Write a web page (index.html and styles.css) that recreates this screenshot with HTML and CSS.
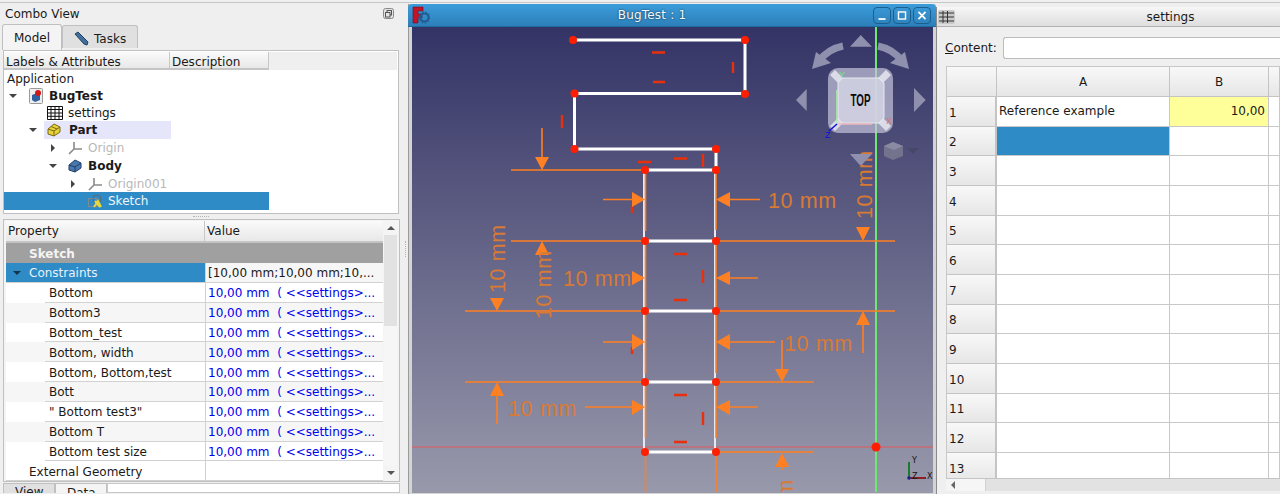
FILE: index.html
```html
<!DOCTYPE html>
<html lang="en">
<head>
  <meta charset="UTF-8">
  <title>BugTest : 1</title>
  <link rel="stylesheet" href="styles.css">
</head>
<body>
<div class="app">

  <!-- left dock -->
  <div class="combo">
    <div class="dock-title">
      <span>Combo View</span>
      <svg class="float-btn" viewBox="0 0 11 11"><rect x=".5" y=".5" width="10" height="10" rx="2" fill="#e4e4e4" stroke="#888"/><rect x="4" y="2.5" width="4.5" height="4.5" fill="none" stroke="#555"/><rect x="2.5" y="4.5" width="4.5" height="4.5" fill="#e4e4e4" stroke="#555"/></svg>
    </div>
    <div class="tabs">
      <div class="tab active">Model</div>
      <div class="tab tasks">
        <svg class="tab-icon" viewBox="0 0 16 16"><path d="M2 3 L5 1 L15 11 L14 14 L11 13 Z" fill="#3f6f9f" stroke="#24405c"/></svg>
        Tasks
      </div>
    </div>

    <div class="tree-frame">
      <div class="tree-head">
        <div class="th labels">Labels &amp; Attributes</div>
        <div class="th desc">Description</div>
      </div>
      <div class="tree-row short lvl0"><span class="label">Application</span></div>
      <div class="tree-row short lvl0">
        <span class="caret down"></span>
        <svg class="ti doc" viewBox="0 0 16 16"><rect x="1.5" y=".5" width="13" height="15" rx="1" fill="#eee" stroke="#999"/><path d="M4 7 L9 5 L12 7 L12 12 L7 14 L4 12 Z" fill="#2f5f9f"/><circle cx="10" cy="5" r="3" fill="#d01818"/></svg>
        <span class="label bold">BugTest</span>
      </div>
      <div class="tree-row short lvl1">
        <svg class="ti sheet-icon" viewBox="0 0 16 14"><path d="M.5 .5H15.5V13.5H.5Z M.5 3.500H15.5 M.5 7H15.5 M.5 10.300H15.5 M4 .5V13.5 M8 .5V13.5 M12 .5V13.5" fill="#fff" stroke="#111"/></svg>
        <span class="label">settings</span>
      </div>
      <div class="tree-row lvl1 with-caret">
        <span class="caret down"></span>
        <span class="hl">
          <svg class="ti part" viewBox="0 0 14 14"><path d="M1 6 L7 1 L13 4 L13 9 L7 13 L1 11 Z" fill="#e8d23c" stroke="#7a6a10"/><path d="M1 6 L7 8 L13 4 M7 8 V13 M4 3.5 L10 6" fill="none" stroke="#7a6a10"/></svg>
          <span class="label bold">Part</span>
        </span>
      </div>
      <div class="tree-row lvl2">
        <span class="caret right"></span>
        <svg class="ti origin" viewBox="0 0 14 14"><path d="M6 1 V8 M6 8 L1 13 M6 8 H14" fill="none" stroke="#8a8a8a" stroke-width="1.6"/></svg>
        <span class="label dim">Origin</span>
      </div>
      <div class="tree-row lvl2">
        <span class="caret down"></span>
        <svg class="ti body-icon" viewBox="0 0 14 14"><path d="M1 6 L7 1 L13 4 L13 9 L7 13 L1 11 Z" fill="#4a78ae" stroke="#1f3f66"/><path d="M1 6 L7 8 L13 4 M7 8 V13" fill="none" stroke="#1f3f66"/></svg>
        <span class="label bold">Body</span>
      </div>
      <div class="tree-row lvl3">
        <span class="caret right"></span>
        <svg class="ti origin" viewBox="0 0 14 14"><path d="M6 1 V8 M6 8 L1 13 M6 8 H14" fill="none" stroke="#8a8a8a" stroke-width="1.6"/></svg>
        <span class="label dim">Origin001</span>
      </div>
      <div class="tree-row lvl3 selected">
        <span class="caret"></span>
        <svg class="ti sketch-icon" viewBox="0 0 16 14"><rect x=".5" y="4.5" width="8" height="8" fill="none" stroke="#7c8a96"/><circle cx="9" cy="5" r="4" fill="none" stroke="#5a6a7a"/><path d="M6 13 L10 7 L13 13 M7 7 L12 13" fill="none" stroke="#e6d83a" stroke-width="2"/></svg>
        <span class="label">Sketch</span>
      </div>
    </div>

    <div class="split-h"></div>

    <div class="prop-frame">
      <div class="prop-table">
        <div class="prop-head">
          <div class="th p-name">Property</div>
          <div class="th p-val">Value</div>
        </div>
        <div class="prop-group">Sketch</div>
        <div class="prop-row top">
          <div class="p-cell p-sel"><span class="caret down light"></span>Constraints</div>
          <div class="p-cell p-list">[10,00 mm;10,00 mm;10,...</div>
        </div>
        <div class="prop-row child"><div class="p-cell">Bottom</div><div class="p-cell p-bound">10,00 mm  ( &lt;&lt;settings&gt;...</div></div>
        <div class="prop-row child alt"><div class="p-cell">Bottom3</div><div class="p-cell p-bound">10,00 mm  ( &lt;&lt;settings&gt;...</div></div>
        <div class="prop-row child"><div class="p-cell">Bottom_test</div><div class="p-cell p-bound">10,00 mm  ( &lt;&lt;settings&gt;...</div></div>
        <div class="prop-row child alt"><div class="p-cell">Bottom, width</div><div class="p-cell p-bound">10,00 mm  ( &lt;&lt;settings&gt;...</div></div>
        <div class="prop-row child"><div class="p-cell">Bottom, Bottom,test</div><div class="p-cell p-bound">10,00 mm  ( &lt;&lt;settings&gt;...</div></div>
        <div class="prop-row child alt"><div class="p-cell">Bott</div><div class="p-cell p-bound">10,00 mm  ( &lt;&lt;settings&gt;...</div></div>
        <div class="prop-row child"><div class="p-cell">" Bottom test3"</div><div class="p-cell p-bound">10,00 mm  ( &lt;&lt;settings&gt;...</div></div>
        <div class="prop-row child alt"><div class="p-cell">Bottom T</div><div class="p-cell p-bound">10,00 mm  ( &lt;&lt;settings&gt;...</div></div>
        <div class="prop-row child"><div class="p-cell">Bottom test size</div><div class="p-cell p-bound">10,00 mm  ( &lt;&lt;settings&gt;...</div></div>
        <div class="prop-row top"><div class="p-cell">External Geometry</div><div class="p-cell"></div></div>
      </div>
      <div class="vscroll">
        <div class="sb-btn"><span class="sb-up"></span></div>
        <div class="sb-thumb"></div>
        <div class="sb-track"></div>
        <div class="sb-btn"><span class="sb-down"></span></div>
      </div>
    </div>

    <div class="bottom-tabs">
      <div class="btab">View</div>
      <div class="btab on">Data</div>
      <div class="btab-rest"></div>
    </div>
  </div>

  <div class="split-v"></div>

  <!-- 3d view window -->
  <div class="viewer">
    <div class="win-title">
      <svg class="fc-logo" viewBox="0 0 18 18"><path d="M1 1H11V5H6V8H10V12H6V17H1Z" fill="#c4142a" stroke="#6e0c18" stroke-width=".6"/><circle cx="12.5" cy="11.5" r="4" fill="none" stroke="#1f5d92" stroke-width="2"/><circle cx="12.5" cy="11.5" r="5.4" fill="none" stroke="#1f5d92" stroke-width="1.2" stroke-dasharray="1.6 1.6"/></svg>
      <div class="win-name">BugTest : 1</div>
      <div class="win-btns">
        <div class="win-btn"><svg viewBox="0 0 18 17"><path d="M5 12.5H13" stroke="#fff" stroke-width="2"/></svg></div>
        <div class="win-btn"><svg viewBox="0 0 18 17"><rect x="5" y="4.5" width="8" height="8" fill="none" stroke="#fff" stroke-width="1.6"/></svg></div>
        <div class="win-btn"><svg viewBox="0 0 18 17"><path d="M5 4.5L13 12.5M13 4.5L5 12.5" stroke="#fff" stroke-width="2"/></svg></div>
      </div>
    </div>
    <div class="canvas">
      <svg class="scene" viewBox="412 27 521 465">
        <!-- grid axes -->
        <path class="axis-x" d="M412 447H933"/>
        <path class="axis-y" d="M876 27V492"/>

        <!-- sketch geometry -->
        <path class="geo" d="M573 40H745V93.500H574.500V149H716V170M645 170H716M645 241H716M645 311H716M645 382H716M645 452H716"/>
        <path class="geo-thin" d="M644 170V452M715 170V452"/>

        <!-- constraint marks -->
        <path class="mark" d="M652 52.500H665M653 82H665M733 62V73M562 115V128M638 162H651M674 158.500H687M703 154V167M632 206V213M674 254H687M703 270V283M674 300H687M632 347V354M674 395H687M703 412V425M674 442H687"/>

        <!-- dimension lines -->
        <path class="dim" d="M511 170H645M511 241H645M465 311H645M465 382H645M716 241H895M716 311H895M716 382H814M716 452H814"/>
        <path class="dim" d="M645.500 170V231M645.500 241V374M645.500 382V438M645.500 452V492M716 170V230M716 241V373M716 382V438M716 452V492"/>
        <path class="dim" d="M542 128V160M603 199.500H634M728 199.500H760M728 278H758M603 342H634M728 342H775M782 340V372M863 320V353M497 394V424M585 407H634M728 407H758M782 460V470"/>

        <!-- arrow heads -->
        <g class="head">
          <polygon points="535,157 549,157 542,170"/>
          <polygon points="632,192 632,207 645,199.500"/>
          <polygon points="730,192 730,207 716,199.500"/>
          <polygon points="856,227 870,227 863,241"/>
          <polygon points="535,255 549,255 542,241"/>
          <polygon points="490,298 504,298 497,311"/>
          <polygon points="632,271 632,285 645,278"/>
          <polygon points="730,271 730,285 716,278"/>
          <polygon points="632,334 632,350 645,342"/>
          <polygon points="730,334 730,350 716,342"/>
          <polygon points="775,369 789,369 782,382"/>
          <polygon points="856,325 870,325 863,311"/>
          <polygon points="490,396 504,396 497,382"/>
          <polygon points="632,400 632,415 645,407"/>
          <polygon points="730,400 730,415 716,407"/>
          <polygon points="775,467 789,467 782,453"/>
        </g>

        <!-- dimension labels -->
        <text class="dim-text" x="768" y="208">10 mm</text>
        <text class="dim-text" x="563" y="286">10 mm</text>
        <text class="dim-text" x="784" y="351">10 mm</text>
        <text class="dim-text" x="508" y="416">10 mm</text>
        <text class="dim-text" transform="translate(872 219) rotate(-90)">10 mm</text>
        <text class="dim-text" transform="translate(505 293) rotate(-90)">10 mm</text>
        <text class="dim-text" transform="translate(551 319) rotate(-90)">10 mm</text>
        <text class="dim-text" transform="translate(793 548) rotate(-90)">10 mm</text>

        <!-- sketch points -->
        <g class="pt">
          <circle cx="573" cy="40" r="4"/><circle cx="745" cy="40" r="4"/>
          <circle cx="745" cy="94" r="4"/><circle cx="574.500" cy="93.500" r="4"/>
          <circle cx="574.500" cy="149" r="4"/><circle cx="716" cy="149" r="4"/>
          <circle cx="645" cy="170" r="4"/><circle cx="716" cy="170" r="4"/>
          <circle cx="645" cy="241" r="4"/><circle cx="716" cy="241" r="4"/>
          <circle cx="645" cy="311" r="4"/><circle cx="716" cy="311" r="4"/>
          <circle cx="645" cy="382" r="4"/><circle cx="716" cy="382" r="4"/>
          <circle cx="645" cy="452" r="4"/><circle cx="716" cy="452" r="4"/>
          <circle cx="876" cy="447" r="4.500"/>
        </g>

        <!-- navigation cube -->
        <g class="nav">
          <polygon points="860.700,35 850,46.700 872,46.700"/>
          <polygon points="796,100 806.700,89 806.700,111"/>
          <polygon points="925.700,100 914,88 914,112"/>
          <polygon points="850,154 872,154 860.700,166"/>
          <path class="nav-arc" d="M843 46Q828 49 819 61"/>
          <polygon points="812,69 816,52 831,63"/>
          <path class="nav-arc" d="M878 46Q893 49 902 61"/>
          <polygon points="909,69 905,52 890,63"/>
        </g>
        <rect class="cube-outer" x="828" y="68" width="65" height="65" rx="10"/>
        <path class="cube-corner" d="M835 70L843 78 838 83 830 75ZM886 70L878 78 883 83 891 75ZM835 131L843 123 838 118 830 126ZM886 131L878 123 883 118 891 126Z"/>
        <polygon class="cube-face" points="842,78 879,78 884,83 884,118 879,123 842,123 838,118 838,83"/>
        <text class="cube-label" x="860.500" y="106" textLength="20" lengthAdjust="spacingAndGlyphs">TOP</text>
        <path class="cube-y" d="M837 90V124"/>
        <path class="cube-x" d="M838 124H872"/>
        <path class="cube-z" d="M837 124L829 131"/>
        <text class="cube-t ty" x="839" y="78">Y</text>
        <text class="cube-t tx" x="886" y="124">X</text>
        <text class="cube-t tz" x="825" y="138">Z</text>
        <path class="mini-side" d="M884 146L893 142 903 146 903 156 893 160 884 156Z"/>
        <path class="mini-top" d="M884 146L893 142 903 146 894 150Z"/>
        <polygon class="mini-drop" points="907,148 919,148 913,154"/>

        <!-- corner axis cross -->
        <path class="cross-y" d="M909 478V462"/>
        <path class="cross-x" d="M909 478H926"/>
        <circle class="cross-o" cx="909" cy="478" r="1.800"/>
        <text class="cross-t" x="912" y="463">Y</text>
        <text class="cross-t" x="912" y="479">Z</text>
        <text class="cross-t" x="927" y="479">X</text>
      </svg>
    </div>
  </div>

  <!-- spreadsheet window -->
  <div class="sheet-win">
    <div class="sheet-title">
      <svg class="sheet-sys" viewBox="0 0 17 14"><rect width="17" height="14" rx="2" fill="#c9c9c9"/><path d="M1 3H16M1 7H16M1 11H16M5 1V13M9.500 1V13" stroke="#333"/></svg>
      <div class="sheet-name">settings</div>
    </div>
    <div class="content-bar">
      <label class="content-label"><u>C</u>ontent:</label>
      <div class="content-input"></div>
    </div>
    <div class="sheet">
      <div class="hd corner"></div><div class="hd col">A</div><div class="hd col">B</div><div class="hd col"></div>
      <div class="hd rowh">1</div><div class="cell">Reference example</div><div class="cell num">10,00</div><div class="cell"></div>
      <div class="hd rowh">2</div><div class="cell cur"></div><div class="cell"></div><div class="cell"></div>
      <div class="hd rowh">3</div><div class="cell"></div><div class="cell"></div><div class="cell"></div>
      <div class="hd rowh">4</div><div class="cell"></div><div class="cell"></div><div class="cell"></div>
      <div class="hd rowh">5</div><div class="cell"></div><div class="cell"></div><div class="cell"></div>
      <div class="hd rowh">6</div><div class="cell"></div><div class="cell"></div><div class="cell"></div>
      <div class="hd rowh">7</div><div class="cell"></div><div class="cell"></div><div class="cell"></div>
      <div class="hd rowh">8</div><div class="cell"></div><div class="cell"></div><div class="cell"></div>
      <div class="hd rowh">9</div><div class="cell"></div><div class="cell"></div><div class="cell"></div>
      <div class="hd rowh">10</div><div class="cell"></div><div class="cell"></div><div class="cell"></div>
      <div class="hd rowh">11</div><div class="cell"></div><div class="cell"></div><div class="cell"></div>
      <div class="hd rowh">12</div><div class="cell"></div><div class="cell"></div><div class="cell"></div>
      <div class="hd rowh">13</div><div class="cell"></div><div class="cell"></div><div class="cell"></div>
    </div>
    <div class="hscroll">
      <div class="hs-btn"><span class="sb-left"></span></div>
      <div class="hs-thumb"></div>
      <div class="hs-track"></div>
    </div>
  </div>

</div>
</body>
</html>
```

FILE: styles.css
```css
* {
  box-sizing: border-box;
}

html, body {
  margin: 0;
  height: 494px;
  overflow: hidden;
}

body {
  font-family: "DejaVu Sans", sans-serif;
  font-size: 12px;
  color: #1a1a1a;
  background-color: #efefef;
}

.app {
  display: flex;
  height: 492px;
  margin-top: 2px;
  border-top: 1px solid #c6c6c6;
  overflow: hidden;
}

/* left dock */
.combo {
  width: 402px;
  flex: none;
  display: flex;
  flex-direction: column;
}

.dock-title {
  height: 20px;
  padding: 1px 8px 0 5px;
  display: flex;
  align-items: center;
  justify-content: space-between;
}

.float-btn {
  width: 11px;
  height: 11px;
}

.tabs {
  height: 25px;
  padding-left: 2px;
  display: flex;
  align-items: flex-end;
}

.tab {
  height: 24px;
  display: flex;
  align-items: center;
  gap: 5px;
  border: 1px solid #c0c0c0;
  border-bottom: none;
  border-radius: 3px 3px 0 0;
}

.tab.active {
  width: 60px;
  height: 26px;
  margin-bottom: -2px;
  padding-left: 11px;
  background-color: #f4f4f4;
  position: relative;
  z-index: 1;
}

.tab.tasks {
  width: 76px;
  height: 23px;
  padding: 3px 0 0 10px;
  background-color: #e0e0e0;
}

.tab-icon {
  width: 16px;
  height: 16px;
}

.tree-frame {
  height: 164px;
  margin: 2px 3px 0 3px;
  padding: 1px 1px 1px 0;
  background-color: #fff;
  border: 1px solid #c0c0c0;
}

.tree-head {
  height: 18px;
  display: flex;
  background-color: #efefef;
}

.th {
  height: 100%;
  display: flex;
  align-items: center;
  padding-left: 2px;
  background: linear-gradient(#fafafa, #e8e8e8);
  border-right: 1px solid #c8c8c8;
  border-bottom: 2px solid #c4c4c4;
}

.tree-head .th {
  padding-top: 3px;
}

.labels {
  width: 166px;
}

.desc {
  width: 99px;
}

.tree-row {
  width: 265px;
  height: 17.75px;
  padding-top: 1px;
  display: flex;
  align-items: center;
}

.tree-row.short {
  height: 17px;
  padding-top: 0;
}

.tree-row.lvl0 {
  padding-left: 3px;
}

.tree-row.lvl0 .caret {
  margin: 0 4px 0 2px;
}

.tree-row.lvl1 {
  padding-left: 43px;
}

.tree-row.with-caret {
  padding-left: 25px;
  padding-top: 0;
}

.tree-row.lvl2 {
  padding-left: 45px;
}

.tree-row.lvl3 {
  padding-left: 65px;
}

.hl {
  width: 127px;
  height: 18px;
  margin-left: 7px;
  padding-left: 3px;
  display: flex;
  align-items: center;
  background-color: #e6e6fa;
}

.tree-row.selected {
  background-color: #2e8bc6;
  color: #f0f6fb;
}

.caret {
  width: 8px;
  height: 8px;
  flex: none;
  position: relative;
}

.caret.down::before {
  content: "";
  position: absolute;
  left: 0;
  top: 2px;
  border-left: 4px solid transparent;
  border-right: 4px solid transparent;
  border-top: 4px solid #444;
}

.caret.right::before {
  content: "";
  position: absolute;
  left: 2px;
  top: 0;
  border-top: 4px solid transparent;
  border-bottom: 4px solid transparent;
  border-left: 4px solid #444;
}

.caret.light::before {
  border-top-color: #12344c;
}

.ti {
  flex: none;
  height: 14px;
  width: 14px;
  margin-right: 6px;
}

.tree-row.lvl0 .ti {
  height: 16px;
  width: 16px;
  margin-right: 5px;
}

.tree-row .caret + .ti {
  margin-left: 11px;
}

.tree-row.lvl0 .caret + .ti {
  margin-left: 7px;
}

.hl .ti {
  margin-right: 8px;
}

.tree-row .sheet-icon {
  width: 16px;
  margin-right: 5px;
}

.tree-row .sketch-icon {
  width: 16px;
  margin-right: 4px;
}

.bold {
  font-weight: bold;
}

.dim {
  color: #b8b8b8;
}

.split-h {
  height: 5px;
  display: flex;
  align-items: center;
  justify-content: center;
}

.split-h::after {
  content: "";
  width: 16px;
  border-top: 1px dotted #b4b4b4;
}

/* property view */
.prop-frame {
  height: 263px;
  margin: 0 2px 0 3px;
  padding: 1px 2px;
  display: flex;
  border: 1px solid #c0c0c0;
  background-color: #f4f4f4;
}

.prop-table {
  width: 377px;
  flex: none;
  background-color: #fff;
}

.prop-head {
  height: 22px;
  display: flex;
  background-color: #f4f4f4;
}

.p-name {
  width: 199px;
}

.p-val {
  width: 178px;
  border-right: none;
}

.prop-group {
  height: 20px;
  padding: 1px 0 0 23px;
  display: flex;
  align-items: center;
  background-color: #a0a0a0;
  color: #f4f4f4;
  font-weight: bold;
}

.prop-row {
  height: 19.85px;
  display: grid;
  grid-template-columns: 199px 178px;
}

.p-cell {
  min-width: 0;
  display: flex;
  align-items: center;
  padding: 2px 0 0 3px;
  white-space: pre;
  border-bottom: 1px solid #d2d2d2;
}

.p-cell + .p-cell {
  padding-left: 2px;
  border-left: 1px solid #d2d2d2;
}

.prop-row.top .p-cell:first-child {
  padding-left: 23px;
}

.prop-row.child .p-cell:first-child {
  margin-left: 39px;
  padding-left: 4px;
}

.prop-row.alt {
  background-color: #f6f6f6;
}

.p-sel.p-cell {
  background-color: #2e8bc6;
  color: #e8f2f9;
  padding-left: 7px !important;
  gap: 8px;
}

.p-list {
  background-color: #f6f6f6;
}

.p-bound {
  color: #0000f0;
}

.vscroll {
  width: 14px;
  margin-left: 1px;
  display: flex;
  flex-direction: column;
  background-color: #f6f6f6;
}

.sb-btn {
  height: 14px;
  flex: none;
  display: flex;
  align-items: center;
  justify-content: center;
  background-color: #f4f4f4;
}

.sb-up {
  border-left: 4px solid transparent;
  border-right: 4px solid transparent;
  border-bottom: 4px solid #555;
}

.sb-down {
  border-left: 4px solid transparent;
  border-right: 4px solid transparent;
  border-top: 4px solid #555;
}

.sb-thumb {
  height: 91px;
  flex: none;
  background-color: #e2e2e2;
}

.sb-track {
  flex: 1;
}

.bottom-tabs {
  height: 10px;
  margin-top: 1px;
  padding-left: 3px;
  display: flex;
  overflow: hidden;
}

.btab {
  width: 52px;
  height: 24px;
  padding: 1px 0 0 11px;
  background-color: #e0e0e0;
  border: 1px solid #c0c0c0;
}

.btab.on {
  width: 52px;
  padding-left: 11px;
  padding-top: 2px;
  background-color: #f4f4f4;
}

.btab-rest {
  flex: 1;
  margin-right: 2px;
  background-color: #fff;
  border: 1px solid #c8c8c8;
}

.split-v {
  width: 6px;
  flex: none;
  display: flex;
  align-items: center;
  justify-content: center;
}

.split-v::after {
  content: "";
  height: 16px;
  border-left: 1px dotted #b4b4b4;
}

/* 3d view */
.viewer {
  width: 528px;
  flex: none;
  margin-top: 1px;
  padding: 0 3px 1px 3px;
  display: flex;
  flex-direction: column;
  background-color: #d4d4d4;
  border-left: 1px solid #9a9a9a;
}

.win-title {
  height: 23px;
  flex: none;
  margin: 0 -3px 0 -4px;
  padding: 0 5px 0 4px;
  display: grid;
  grid-template-columns: 1fr auto 1fr;
  align-items: center;
  background: linear-gradient(#3b9cda, #2d80b9);
  border-radius: 4px 4px 0 0;
  border-bottom: 1px solid #1f6a9e;
}

.fc-logo {
  width: 18px;
  height: 18px;
}

.win-name {
  margin-right: 39px;
  letter-spacing: .2px;
  color: #f2f8fc;
  text-shadow: 0 0 2px #123;
}

.win-btns {
  display: flex;
  justify-content: flex-end;
  gap: 2px;
}

.win-btn {
  width: 18px;
  height: 17px;
  border: 1px solid #1a5f8e;
  border-radius: 4px;
}

.win-btn svg {
  display: block;
  width: 16px;
  height: 15px;
}

.canvas {
  flex: 1;
  min-height: 0;
  background: linear-gradient(#333366, #9999ac);
}

.scene {
  display: block;
  width: 521px;
  height: 465px;
}

.axis-x {
  stroke: #e25a5a;
  stroke-width: 1.2;
}

.axis-y {
  stroke: #6fe86f;
  stroke-width: 2;
}

.geo {
  fill: none;
  stroke: #fff;
  stroke-width: 3;
}

.geo-thin {
  fill: none;
  stroke: #e8e8ee;
  stroke-width: 2;
}

.mark {
  fill: none;
  stroke: #e8300c;
  stroke-width: 2.4;
}

.dim {
  fill: none;
  stroke: #ff7f20;
  stroke-width: 1.6;
}

.head {
  fill: #ff8022;
}

.dim-text {
  font-family: "Liberation Sans", sans-serif;
  font-size: 21.5px;
  letter-spacing: .6px;
  fill: #d87a34;
}

.pt {
  fill: #ff1e00;
}

.nav {
  fill: #8f90ad;
}

.nav-arc {
  fill: none;
  stroke: #8f90ad;
  stroke-width: 7;
}

.cube-outer {
  fill: #c4c4dc;
  opacity: .7;
}

.cube-corner {
  fill: #dcdce8;
}

.cube-face {
  fill: #d4d4e4;
  fill-opacity: .85;
  stroke: #e8e8f0;
}

.cube-label {
  font-family: "Liberation Sans", sans-serif;
  font-size: 16px;
  font-weight: bold;
  text-anchor: middle;
  fill: #0a0a0a;
}

.cube-y {
  stroke: #a8f0a8;
  stroke-width: 1.5;
}

.cube-x {
  stroke: #f0b8c0;
  stroke-width: 1.5;
}

.cube-z {
  stroke: #1010e0;
  stroke-width: 1.5;
}

.cube-t {
  font-family: "Liberation Sans", sans-serif;
  font-size: 9px;
}

.ty {
  fill: #70e870;
}

.tx {
  fill: #d87878;
}

.tz {
  fill: #1010e0;
}

.mini-side {
  fill: #73738e;
}

.mini-top {
  fill: #8a8aa3;
}

.mini-drop {
  fill: #47476a;
}

.cross-y {
  stroke: #1c7a2c;
  stroke-width: 2;
}

.cross-x {
  stroke: #8a2020;
  stroke-width: 2;
}

.cross-o {
  fill: #20208a;
}

.cross-t {
  font-family: "DejaVu Sans", sans-serif;
  font-size: 8px;
  fill: #111;
}

/* spreadsheet */
.sheet-win {
  flex: 1;
  min-width: 0;
  margin-top: 4px;
  display: flex;
  flex-direction: column;
  border-left: 1px solid #8a8a8a;
}

.sheet-title {
  height: 20px;
  flex: none;
  display: flex;
  align-items: center;
  padding-left: 1px;
  background: linear-gradient(#f6f6f6, #dedede);
  border-bottom: 1px solid #b0b0b0;
}

.sheet-sys {
  width: 17px;
  height: 14px;
  flex: none;
}

.sheet-name {
  flex: 1;
  text-align: center;
  padding-left: 106px;
}

.content-bar {
  height: 39px;
  flex: none;
  display: flex;
  align-items: center;
  padding: 3px 0 0 8px;
  gap: 6px;
}

.content-input {
  flex: 1;
  height: 22px;
  background-color: #fff;
  border: 1px solid #bcbcbc;
  border-right: none;
  border-radius: 3px 0 0 3px;
}

.sheet {
  height: 412px;
  flex: none;
  margin-left: 9px;
  display: grid;
  grid-template-columns: 50px 173px 99px 1fr;
  grid-template-rows: 30px repeat(13, 29.67px);
  overflow: hidden;
  background-color: #fff;
  border-top: 1px solid #c8c8c8;
  border-left: 1px solid #c8c8c8;
}

.hd {
  background: linear-gradient(#f8f8f8, #e6e6e6);
  border-right: 1px solid #c4c4c4;
  border-bottom: 1px solid #c4c4c4;
}

.col {
  display: flex;
  align-items: center;
  justify-content: center;
}

.rowh {
  display: flex;
  align-items: center;
  padding: 3px 0 0 2px;
  border-right-width: 2px;
}

.cell {
  display: flex;
  align-items: center;
  padding: 0 3px 0 2px;
  border-right: 1px solid #c8c8c8;
  border-bottom: 1px solid #c8c8c8;
}

.cell.num {
  justify-content: flex-end;
  background-color: #ffff99;
}

.cell.cur {
  background-color: #2e8bc6;
}

.hscroll {
  height: 13px;
  flex: none;
  margin-left: 9px;
  display: flex;
  background-color: #e2e2e2;
  border-top: 1px solid #c4c4c4;
}

.hs-btn {
  width: 14px;
  display: flex;
  align-items: center;
  justify-content: center;
  background-color: #f4f4f4;
}

.sb-left {
  border-top: 4px solid transparent;
  border-bottom: 4px solid transparent;
  border-right: 4px solid #666;
}

.hs-thumb {
  width: 26px;
  background-color: #f6f6f6;
  border-right: 1px solid #d0d0d0;
}

.hs-track {
  flex: 1;
}
```
